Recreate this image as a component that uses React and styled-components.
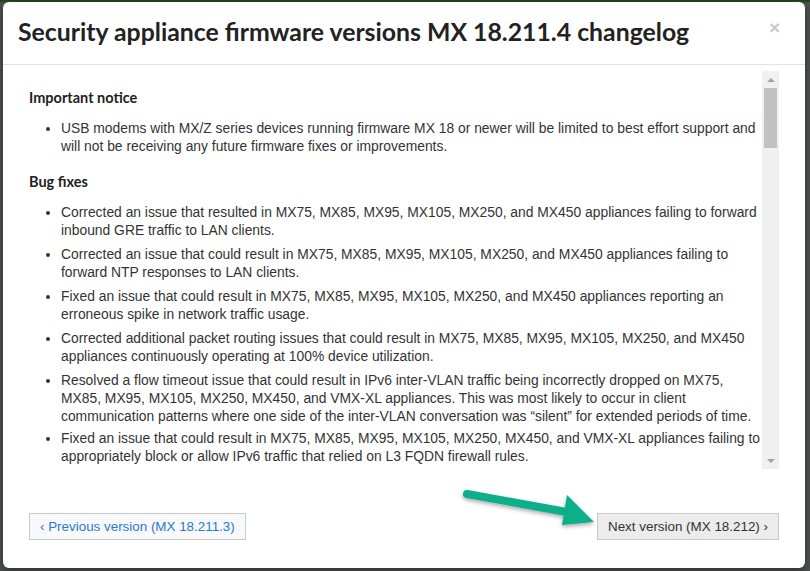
import React from "react";
import styled, { createGlobalStyle } from "styled-components";

const Global = createGlobalStyle`
  html, body { margin: 0; padding: 0; }
  body { background: #4f5050; width: 810px; height: 571px; overflow: hidden; }
  * { box-sizing: border-box; }
`;

const Page = styled.div`
  position: relative;
  width: 810px;
  height: 571px;
  border-top: 2px solid #1c4a1f;
  padding: 0 5px 3px 3px;
  display: flex;
`;

const Modal = styled.div`
  flex: 1;
  background: #fff;
  border-radius: 6px;
  display: flex;
  flex-direction: column;
  box-shadow: 0 3px 9px rgba(0,0,0,0.4);
`;

const Header = styled.div`
  height: 63px;
  border-bottom: 1px solid #e3e3e3;
  display: flex;
  align-items: center;
  justify-content: space-between;
  padding: 0 25px 4px 15px;
`;

const Title = styled.h2`
  margin: 0;
  font-family: "Lato", "Inter", sans-serif;
  font-weight: 700;
  font-size: 24.8px;
  color: #222;
`;

const Close = styled.button`
  border: 0;
  background: none;
  color: #c8c8c8;
  font-family: "Liberation Sans", sans-serif;
  font-size: 19px;
  font-weight: 700;
  padding: 0;
  margin-top: -6px;
  cursor: pointer;
`;

const Body = styled.div`
  padding: 6px 26px 0 26px;
`;

const Scroller = styled.div`
  height: 398px;
  display: flex;
`;

const Content = styled.div`
  flex: 1;
  overflow: hidden;
  padding: 18px 0 0 0;
  font-family: "Liberation Sans", Arial, sans-serif;
  color: #333;
`;

const Track = styled.div`
  width: 17px;
  background: #f0f0f0;
  display: flex;
  flex-direction: column;
  align-items: center;
`;

const ArrowBtn = styled.div`
  height: 17px;
  width: 17px;
  display: flex;
  align-items: center;
  justify-content: center;
  &::before {
    content: "";
    width: 0;
    height: 0;
    border-left: 4px solid transparent;
    border-right: 4px solid transparent;
    ${p => (p.$down
      ? "border-top: 4px solid #a3a3a3;"
      : "border-bottom: 4px solid #a3a3a3;")}
  }
`;

const Thumb = styled.div`
  width: 13px;
  height: 60px;
  background: #c1c1c1;
`;

const Spacer = styled.div`
  flex: 1;
`;

const SectionTitle = styled.h4`
  margin: 0 0 12px 0;
  font-family: "Lato", "Inter", sans-serif;
  font-weight: 700;
  font-size: 14.5px;
  color: #222;
  line-height: 18px;
`;

const List = styled.ul`
  margin: 0 0 18px 0;
  padding-left: 32px;
  font-size: 13.85px;
  line-height: 18px;
`;

const Item = styled.li`
  margin-bottom: 6px;
  &:nth-child(5) { margin-bottom: 4px; }
`;

const Footer = styled.div`
  flex: 1;
  display: flex;
  justify-content: space-between;
  align-items: center;
  padding: 16px 26px 0 26px;
`;

const NavButton = styled.button`
  height: 27px;
  padding: 0 10px;
  font-family: "Liberation Sans", Arial, sans-serif;
  font-size: 13.4px;
  border: 1px solid #c9c9c9;
  background: ${p => (p.$primary ? "#ececec" : "#f8f9fa")};
  color: ${p => (p.$primary ? "#333" : "#2b78d0")};
  cursor: pointer;
`;

const ArrowLayer = styled.svg`
  position: absolute;
  left: 0;
  top: 0;
  pointer-events: none;
`;

const notice = [
  "USB modems with MX/Z series devices running firmware MX 18 or newer will be limited to best effort support and will not be receiving any future firmware fixes or improvements.",
];

const fixes = [
  "Corrected an issue that resulted in MX75, MX85, MX95, MX105, MX250, and MX450 appliances failing to forward inbound GRE traffic to LAN clients.",
  "Corrected an issue that could result in MX75, MX85, MX95, MX105, MX250, and MX450 appliances failing to forward NTP responses to LAN clients.",
  "Fixed an issue that could result in MX75, MX85, MX95, MX105, MX250, and MX450 appliances reporting an erroneous spike in network traffic usage.",
  "Corrected additional packet routing issues that could result in MX75, MX85, MX95, MX105, MX250, and MX450 appliances continuously operating at 100% device utilization.",
  "Resolved a flow timeout issue that could result in IPv6 inter-VLAN traffic being incorrectly dropped on MX75, MX85, MX95, MX105, MX250, MX450, and VMX-XL appliances. This was most likely to occur in client communication patterns where one side of the inter-VLAN conversation was \u201csilent\u201d for extended periods of time.",
  "Fixed an issue that could result in MX75, MX85, MX95, MX105, MX250, MX450, and VMX-XL appliances failing to appropriately block or allow IPv6 traffic that relied on L3 FQDN firewall rules.",
];

export default function App() {
  return (
    <>
      <Global />
      <Page>
        <Modal>
          <Header>
            <Title>Security appliance firmware versions MX 18.211.4 changelog</Title>
            <Close aria-label="Close">×</Close>
          </Header>
          <Body>
            <Scroller>
              <Content>
                <SectionTitle>Important notice</SectionTitle>
                <List>
                  {notice.map((t, i) => <Item key={i}>{t}</Item>)}
                </List>
                <SectionTitle>Bug fixes</SectionTitle>
                <List>
                  {fixes.map((t, i) => <Item key={i}>{t}</Item>)}
                </List>
              </Content>
              <Track aria-hidden="true">
                <ArrowBtn />
                <Thumb />
                <Spacer />
                <ArrowBtn $down />
              </Track>
            </Scroller>
          </Body>
          <Footer>
            <NavButton>‹ Previous version (MX 18.211.3)</NavButton>
            <NavButton $primary>Next version (MX 18.212) ›</NavButton>
          </Footer>
        </Modal>
        <ArrowLayer width="810" height="571" viewBox="0 0 810 571">
          <defs>
            <filter id="sh" x="-20%" y="-50%" width="140%" height="200%">
              <feDropShadow dx="0" dy="2" stdDeviation="2" floodColor="#000" floodOpacity="0.35" />
            </filter>
          </defs>
          <g filter="url(#sh)" fill="#0cae8a">
            <line x1="467" y1="492" x2="572" y2="511" stroke="#0cae8a" strokeWidth="8" strokeLinecap="round" />
            <polygon points="567,493 594,520 562,523" />
          </g>
        </ArrowLayer>
      </Page>
    </>
  );
}
